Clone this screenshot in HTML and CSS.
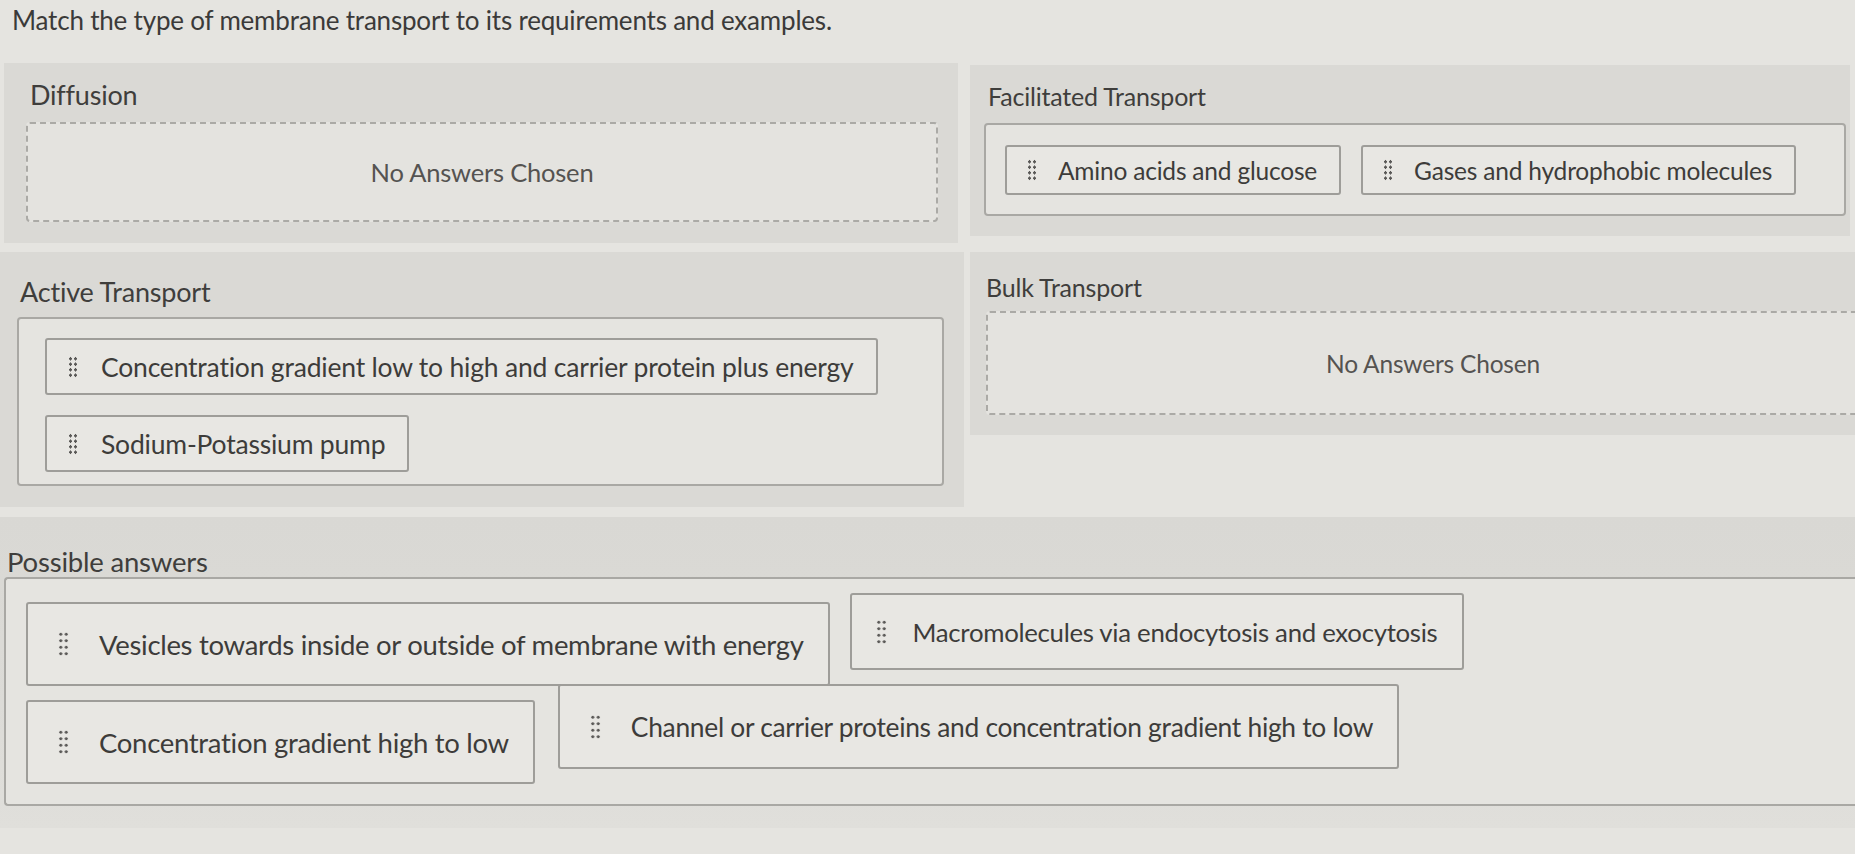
FILE: index.html
```html
<!DOCTYPE html>
<html>
<head>
<meta charset="utf-8">
<link rel="stylesheet" href="styles.css">
</head>
<body>
<div class="page">
  <h1 class="title">Match the type of membrane transport to its requirements and examples.</h1>

  <div class="targets">
    <section class="panel diffusion left">
      <div class="panel-label">Diffusion</div>
      <div class="drop empty">No Answers Chosen</div>
    </section>

    <section class="panel facilitated right">
      <div class="panel-label">Facilitated Transport</div>
      <div class="drop filled">
        <div class="chip"><span class="handle"></span><span>Amino acids and glucose</span></div>
        <div class="chip"><span class="handle"></span><span>Gases and hydrophobic molecules</span></div>
      </div>
    </section>

    <section class="panel active left">
      <div class="panel-label">Active Transport</div>
      <div class="drop filled stack">
        <div class="chip big"><span class="handle"></span><span>Concentration gradient low to high and carrier protein plus energy</span></div>
        <div class="chip big"><span class="handle"></span><span>Sodium-Potassium pump</span></div>
      </div>
    </section>

    <section class="panel bulk right">
      <div class="panel-label">Bulk Transport</div>
      <div class="drop empty">No Answers Chosen</div>
    </section>
  </div>

  <section class="answers">
    <div class="answers-label">Possible answers</div>
    <div class="answers-box">
      <div class="answers-row">
        <div class="chip huge near"><span class="handle"></span><span>Vesicles towards inside or outside of membrane with energy</span></div>
        <div class="chip huge far raised"><span class="handle"></span><span>Macromolecules via endocytosis and exocytosis</span></div>
      </div>
      <div class="answers-row">
        <div class="chip huge near"><span class="handle"></span><span>Concentration gradient high to low</span></div>
        <div class="chip huge mid raised2"><span class="handle"></span><span>Channel or carrier proteins and concentration gradient high to low</span></div>
      </div>
    </div>
  </section>
</div>
</body>
</html>
```

FILE: styles.css
```css
* { box-sizing: border-box; }

html, body {
  margin: 0;
  padding: 0;
  background: #e5e4e0;
  width: 1855px;
  height: 854px;
  overflow: hidden;
}

body {
  font-family: Lato, "Open Sans", "Liberation Sans", sans-serif;
  color: #454341;
}

.page {
  padding: 5px 0 0 0;
}

.title {
  margin: 0 0 0 12px;
  font-size: 26px;
  font-weight: 400;
  line-height: 30px;
  color: #3b3a39;
  letter-spacing: -0.2px;
}

.targets {
  margin-top: 28px;
  display: grid;
  grid-template-columns: 954px 880px;
  column-gap: 12px;
  row-gap: 9px;
  align-items: start;
  padding-left: 4px;
}

.panel {
  background: #dad9d5;
  padding: 19px 20px 20px 22px;
}

.panel-label {
  font-size: 25px;
  line-height: 26px;
  color: #3f3e3c;
  margin: 0 0 14px 4px;
  letter-spacing: -0.2px;
}

.left .panel-label { font-size: 27px; }

.diffusion { padding-bottom: 21px; }

.facilitated {
  margin-top: 2px;
  padding: 18px 4px 20px 14px;
}

.active {
  margin-left: -4px;
  width: 964px;
  padding: 27px 20px 21px 17px;
}
.active .panel-label { margin-left: 3px; margin-bottom: 12px; }

.bulk {
  padding: 22px 0 20px 16px;
  margin-right: -30px;
}
.bulk .panel-label { margin-left: 0; margin-bottom: 11px; }

.drop {
  border-radius: 4px;
}

.drop.empty {
  height: 100px;
  border: 2px dashed #abaaa6;
  background: #e4e3df;
  display: flex;
  align-items: center;
  justify-content: center;
  font-size: 25.5px;
  color: #555351;
  letter-spacing: -0.2px;
}

.bulk .drop.empty { height: 104px; font-size: 24.5px; }

.drop.filled {
  border: 2px solid #a9a8a4;
  background: #e5e4e0;
  padding: 20px 19px 19px 19px;
  display: flex;
  flex-wrap: wrap;
  gap: 20px 20px;
}

.drop.stack {
  flex-direction: column;
  align-items: flex-start;
  padding: 19px 26px 12px 26px;
}

.chip {
  display: inline-flex;
  align-items: center;
  height: 50px;
  padding: 0 22px 0 20px;
  border: 2px solid #9e9d99;
  border-radius: 3px;
  background: #e8e7e3;
  font-size: 24.5px;
  color: #3d3c3a;
  white-space: nowrap;
  letter-spacing: -0.2px;
}

.chip.big {
  height: 57px;
  font-size: 26.5px;
  padding: 0 22px 0 21px;
}

.handle {
  flex: none;
  width: 10px;
  height: 22px;
  margin-right: 21px;
  background-image: radial-gradient(circle, #5a5957 1.4px, transparent 1.7px);
  background-size: 5px 5.5px;
  background-position: 0 0;
}

.chip.big .handle { margin-right: 23px; }

.answers {
  margin-top: 10px;
  background: linear-gradient(#d9d8d4, #dcdbd7 60%, #e0dfdb);
  padding: 32px 0 22px 4px;
}

.answers-label {
  font-size: 27.5px;
  line-height: 26px;
  margin-left: 3px;
  color: #3f3e3c;
  letter-spacing: -0.2px;
}

.answers-box {
  margin-top: 2px;
  border: 2px solid #a9a8a4;
  border-right: none;
  border-radius: 4px 0 0 4px;
  background: #e5e4e0;
  padding: 23px 0 20px 20px;
  display: flex;
  flex-direction: column;
  gap: 14px;
}

.answers-row {
  display: flex;
  gap: 20px;
  align-items: flex-start;
}

.chip.huge {
  height: 84px;
  padding: 0 24px 0 30px;
  letter-spacing: -0.3px;
}
.chip.near { font-size: 27.5px; }
.chip.far { font-size: 25.8px; padding-left: 24px; }
.chip.mid { font-size: 26.4px; margin-left: 3px; }
.chip.huge .handle {
  width: 11px;
  height: 26px;
  margin-right: 30px;
  background-size: 5.5px 6.5px;
}
.chip.huge.far .handle { margin-right: 26px; }
.chip.raised {
  margin-top: -9px;
  height: 77px;
}
.chip.raised2 {
  margin-top: -16px;
  height: 85px;
}
```
